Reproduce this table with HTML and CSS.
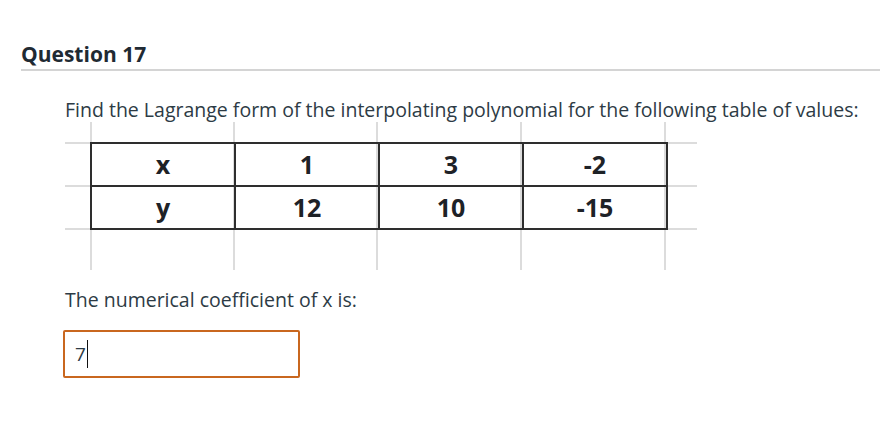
FILE: index.html
```html
<!DOCTYPE html>
<html>
<head>
<meta charset="utf-8">
<link rel="stylesheet" href="styles.css">
</head>
<body>
  <div class="question">
    <h2 class="q-title">Question 17</h2>
    <div class="q-body">
      <p class="prompt">Find the Lagrange form of the interpolating polynomial for the following table of values:</p>
      <div class="sheet">
        <table class="values">
          <tr><th>x</th><td>1</td><td>3</td><td>-2</td></tr>
          <tr><th>y</th><td>12</td><td>10</td><td>-15</td></tr>
        </table>
      </div>
      <p class="ask">The numerical coefficient of x is:</p>
      <div class="answer"><span class="val">7</span><span class="caret"></span></div>
    </div>
  </div>
</body>
</html>
```
FILE: styles.css
```css
html, body {
  margin: 0;
  padding: 0;
  background: #ffffff;
}
body {
  font-family: "Open Sans", "DejaVu Sans", sans-serif;
  color: #2d3b45;
}
.question {
  padding-top: 40px;
}
.q-title {
  margin: 0 0 0 21px;
  font-size: 21px;
  font-weight: 700;
  line-height: 28px;
  color: #1f2a33;
  padding-bottom: 1px;
  border-bottom: 2px solid #d4d4d4;
}
.q-body {
  padding-left: 65px;
}
.prompt {
  margin: 26px 0 0 0;
  font-size: 19.5px;
  line-height: 26px;
}
.sheet {
  width: 632px;
  height: 148px;
  margin-top: -1px;
  box-sizing: border-box;
  padding: 21px 0 0 25px;
  background:
    linear-gradient(#dcdcdc, #dcdcdc) 0 20px / 100% 2px no-repeat,
    linear-gradient(#dcdcdc, #dcdcdc) 0 63px / 100% 2px no-repeat,
    linear-gradient(#dcdcdc, #dcdcdc) 0 106px / 100% 2px no-repeat,
    linear-gradient(#dcdcdc, #dcdcdc) 25px 0 / 2px 100% no-repeat,
    linear-gradient(#dcdcdc, #dcdcdc) 168px 0 / 2px 100% no-repeat,
    linear-gradient(#dcdcdc, #dcdcdc) 311px 0 / 2px 100% no-repeat,
    linear-gradient(#dcdcdc, #dcdcdc) 455px 0 / 2px 100% no-repeat,
    linear-gradient(#dcdcdc, #dcdcdc) 599px 0 / 2px 100% no-repeat;
}
.values {
  border-collapse: collapse;
  margin-top: -1px;
  margin-left: 0;
  font-family: "Open Sans", "DejaVu Sans", sans-serif;
  font-weight: 700;
  font-size: 25px;
  color: #1e2227;
}
.values th, .values td {
  width: 142px;
  height: 41px;
  padding: 0;
  border: 2px solid #2e2e2e;
  text-align: center;
  vertical-align: middle;
  font-weight: 700;
  line-height: 1;
}
.ask {
  margin: 17px 0 0 0;
  font-size: 19.5px;
  line-height: 26px;
}
.answer {
  margin: 17px 0 0 -2px;
  width: 223px;
  height: 44px;
  border: 2px solid #c9671f;
  border-radius: 2px;
  display: flex;
  align-items: center;
  padding-left: 10px;
  box-sizing: content-box;
  font-size: 19px;
}
.val {
  color: #2d3b45;
}
.caret {
  display: inline-block;
  width: 1px;
  height: 28px;
  background: #111;
  margin-left: 1px;
}
```
